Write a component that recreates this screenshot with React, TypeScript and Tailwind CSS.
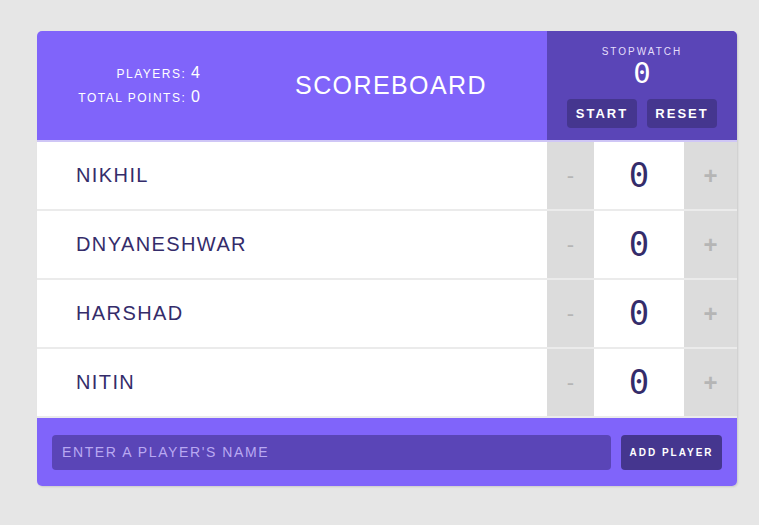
import React from "react"

const players = [
  { name: "Nikhil", score: 0 },
  { name: "Dnyaneshwar", score: 0 },
  { name: "Harshad", score: 0 },
  { name: "Nitin", score: 0 },
]

const sans = { fontFamily: '"Liberation Sans", Arial, sans-serif' }

export default function App() {
  const total = players.reduce((sum, p) => sum + p.score, 0)

  return (
    <div className="min-h-[525px] bg-[#e6e6e6] pt-[31px] pl-[37px]" style={sans}>
      <div className="w-[700px] overflow-hidden rounded-[5px] shadow-[1px_1px_2px_rgba(0,0,0,0.12)]">
        {/* Header */}
        <div className="flex h-[109px] bg-[#8064fa] border-b-2 border-[#cfc6f6] box-content">
          <div className="flex w-[198px] flex-col justify-center gap-[3px] pr-[35px] text-right text-white">
            <div className="leading-[19px]">
              <span className="text-[12px] tracking-[1.5px]">PLAYERS: </span>
              <span className="text-[16px]">{players.length}</span>
            </div>
            <div className="leading-[19px]">
              <span className="text-[12px] tracking-[1.5px]">TOTAL POINTS: </span>
              <span className="text-[16px]">{total}</span>
            </div>
          </div>
          <div className="flex flex-1 items-center justify-center">
            <h1 className="text-[25px] font-normal tracking-[1.4px] text-white">SCOREBOARD</h1>
          </div>
          <div className="flex w-[190px] flex-col items-center bg-[#5a45b7] pt-[15px]">
            <div className="text-[10px] leading-[12px] tracking-[2px] text-[#e4defb]">STOPWATCH</div>
            <div
              className="text-[29px] leading-[30px] text-white"
              style={{ fontFamily: '"DejaVu Sans Mono", monospace' }}
            >
              0
            </div>
            <div className="mt-[11px] flex gap-[10px]">
              <button className="h-[29px] w-[70px] rounded-[4px] bg-[#45368f] text-[13px] font-bold tracking-[2px] text-white">
                START
              </button>
              <button className="h-[29px] w-[70px] rounded-[4px] bg-[#45368f] text-[13px] font-bold tracking-[2px] text-white">
                RESET
              </button>
            </div>
          </div>
        </div>

        {/* Players */}
        {players.map((p) => (
          <div key={p.name} className="flex h-[69px] border-b-2 border-[#ebebeb] bg-white last:border-[#cfc6f6]">
            <div className="flex flex-1 items-center pl-[39px] pb-[1px] text-[20px] tracking-[1.4px] text-[#342c6a]">
              {p.name.toUpperCase()}
            </div>
            <div className="flex">
              <button className="w-[47px] bg-[#dcdcdc] text-[22px] text-[#b5b5b5]">-</button>
              <div
                className="flex w-[90px] items-center justify-center text-[34px] text-[#342c6a]"
                style={{ fontFamily: '"DejaVu Sans Mono", monospace' }}
              >
                {p.score}
              </div>
              <button className="w-[53px] bg-[#dcdcdc] text-[24px] font-bold text-[#b5b5b5]">+</button>
            </div>
          </div>
        ))}

        {/* Add player */}
        <div className="flex h-[68px] items-center gap-[10px] bg-[#8064fa] px-[15px]">
          <input
            placeholder="ENTER A PLAYER'S NAME"
            className="h-[35px] flex-1 rounded-[4px] bg-[#5a45b7] px-[10px] text-[14px] tracking-[1.6px] text-white placeholder-[#b9a9f2] outline-none"
          />
          <button className="h-[35px] w-[101px] rounded-[4px] bg-[#45368f] text-[10px] font-bold tracking-[2px] text-white">
            ADD PLAYER
          </button>
        </div>
      </div>
    </div>
  )
}
